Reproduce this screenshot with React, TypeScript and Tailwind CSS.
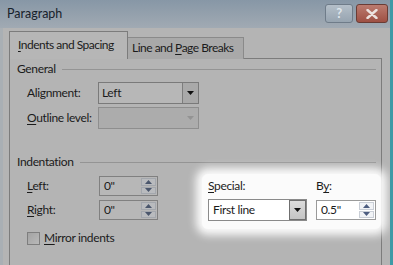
const U = ({ c }: { c: string }) => (
  <span className="underline decoration-1 underline-offset-[2px]">{c}</span>
);

function Caret({ color }: { color: string }) {
  return (
    <svg width="7" height="4" viewBox="0 0 7 4">
      <path d="M0 0h7L3.5 4z" fill={color} />
    </svg>
  );
}

function SpinArrows({ light }: { light?: boolean }) {
  const box = light
    ? "flex flex-1 items-center justify-center border border-[#c9ced6] bg-[#f1f3f6]"
    : "flex flex-1 items-center justify-center border border-[#a3a7ad] bg-[#b9bbbe]";
  const fill = light ? "#4d5d80" : "#4a566c";
  return (
    <div className="flex w-[16px] flex-col gap-px py-px pr-px">
      <div className={box}>
        <svg width="7" height="4" viewBox="0 0 7 4">
          <path d="M3.5 0L7 4H0z" fill={fill} />
        </svg>
      </div>
      <div className={box}>
        <svg width="7" height="4" viewBox="0 0 7 4">
          <path d="M0 0h7L3.5 4z" fill={fill} />
        </svg>
      </div>
    </div>
  );
}

function Spinner({ value, light, w }: { value: string; light?: boolean; w: string }) {
  return (
    <div
      className={`flex h-[20px] ${w} ${
        light ? "border border-[#9a9a9a] bg-white" : "border border-[#808080] bg-[#b7b7b7]"
      }`}
    >
      <span className="flex-1 pl-[4px] leading-[18px]">{value}</span>
      <SpinArrows light={light} />
    </div>
  );
}

export default function App() {
  return (
    <div className="flex h-[265px] w-[393px] overflow-hidden whitespace-nowrap bg-[#b4b4b4] font-['Lato',sans-serif] text-[12px] tracking-[-0.35px] text-[#1b1b1b]">
      <div className="flex w-[390px] flex-col">
        {/* title bar */}
        <div className="flex h-[28px] shrink-0 items-start bg-gradient-to-b from-[#8797a6] to-[#a1aab3] pr-[2px]">
          <span className="pl-[7px] pt-[5px] text-[12.5px] leading-[18px] tracking-normal text-[#17212b]">Paragraph</span>
          <div className="ml-auto mt-[4px] flex gap-[3px]">
            <div className="flex h-[19px] w-[28px] items-center justify-center rounded-[3px] border border-[#6f7c89] bg-gradient-to-b from-[#b4bfc9] to-[#97a4b0] text-[13px] font-bold leading-none text-[#dfe6ec]">
              ?
            </div>
            <div className="flex h-[19px] w-[32px] items-center justify-center rounded-[3px] border border-[#6a3c35] bg-gradient-to-b from-[#bb7b6f] to-[#9e5044]">
              <svg width="12" height="10" viewBox="0 0 12 10">
                <path d="M1.5 1l9 8M10.5 1l-9 8" stroke="#ece2df" strokeWidth="2.4" strokeLinecap="round" />
              </svg>
            </div>
          </div>
        </div>

        {/* body */}
        <div className="flex flex-1 flex-col border-l-[3px] border-[#a9afb4] pl-[6px] pt-[3px]">
          {/* tabs */}
          <div className="relative z-10 -mb-px flex h-[28px] items-end tracking-[-0.5px]">
            <div className="h-[28px] w-[119px] border border-b-0 border-[#7c7c7c] bg-[#b6b6b6] pl-[8px] pt-[5px] leading-[16px]">
              <U c="I" />ndents and Spacing
            </div>
            <div className="h-[22px] w-[116px] border-r border-t border-[#8a8a8a] bg-[#a9a9a9] pl-[4px] pt-[2px] leading-[16px]">
              Line and <U c="P" />age Breaks
            </div>
          </div>

          {/* panel */}
          <div className="flex w-[373px] flex-1 flex-col border border-b-0 border-[#7c7c7c] bg-[#b4b4b4]">
            <div className="flex items-center pl-[7px] pr-[5px] pt-[2px] leading-[16px]">
              <span>General</span>
              <div className="ml-[6px] h-px flex-1 bg-[#949494]" />
            </div>

            <div className="mt-[5px] flex h-[22px] items-center pl-[17px]">
              <span className="w-[71px]">Alignment:</span>
              <div className="flex h-[22px] w-[101px] border border-[#7a7a7a] bg-[#b7b7b7]">
                <span className="flex-1 pl-[3px] leading-[20px]">Left</span>
                <div className="flex w-[16px] items-center justify-center border-l border-[#7d7d7d] bg-[#a9a9a9]">
                  <Caret color="#111" />
                </div>
              </div>
            </div>

            <div className="mt-[3px] flex h-[22px] items-center pl-[17px]">
              <span className="w-[71px]">
                <U c="O" />utline level:
              </span>
              <div className="flex h-[22px] w-[101px] border border-[#8e8e8e] bg-[#acacac]">
                <span className="flex-1" />
                <div className="flex w-[16px] items-center justify-center">
                  <Caret color="#939393" />
                </div>
              </div>
            </div>

            <div className="mt-[25px] flex items-center pl-[7px] pr-[5px] leading-[16px]">
              <span>Indentation</span>
              <div className="ml-[6px] h-px flex-1 bg-[#949494]" />
            </div>

            <div className="flex">
              <div className="flex flex-col pl-[17px] pt-[6px]">
                <div className="flex items-center">
                  <span className="w-[72px]">
                    <U c="L" />eft:
                  </span>
                  <Spinner value={'0"'} w="w-[59px]" />
                </div>
                <div className="mt-[4px] flex items-center">
                  <span className="w-[72px]">
                    <U c="R" />ight:
                  </span>
                  <Spinner value={'0"'} w="w-[59px]" />
                </div>
                <div className="mt-[11px] flex items-center gap-[4px]">
                  <div className="h-[13px] w-[13px] border border-[#7e7e7e] bg-gradient-to-br from-[#a3a3a3] to-[#b9b9b9]" />
                  <span className="leading-[14px]">
                    <U c="M" />irror indents
                  </span>
                </div>
              </div>

              {/* highlighted group */}
              <div className="ml-[44px] mt-[4px] flex h-[55px] gap-[9px] self-start rounded-[6px] bg-[#fbfbfb] pl-[6px] pr-[5px] pt-[4px] shadow-[0_0_9px_6px_#fbfbfb]">
                <div className="flex flex-col">
                  <span className="leading-[16px]">
                    <U c="S" />pecial:
                  </span>
                  <div className="mt-[5px] flex h-[22px] w-[99px] border border-[#8a8a8a] bg-white">
                    <span className="flex-1 pl-[4px] leading-[20px]">First line</span>
                    <div className="flex w-[17px] items-center justify-center border border-[#6f6f6f] bg-gradient-to-b from-[#dcdcdc] to-[#c4c4c4]">
                      <Caret color="#111" />
                    </div>
                  </div>
                </div>
                <div className="flex flex-col">
                  <span className="leading-[16px]">
                    B<U c="y" />:
                  </span>
                  <div className="mt-[6px]">
                    <Spinner value={'0.5"'} light w="w-[60px]" />
                  </div>
                </div>
              </div>
            </div>
          </div>
        </div>
      </div>
      <div className="w-[3px] bg-[#3d9aa6]" />
    </div>
  );
}
